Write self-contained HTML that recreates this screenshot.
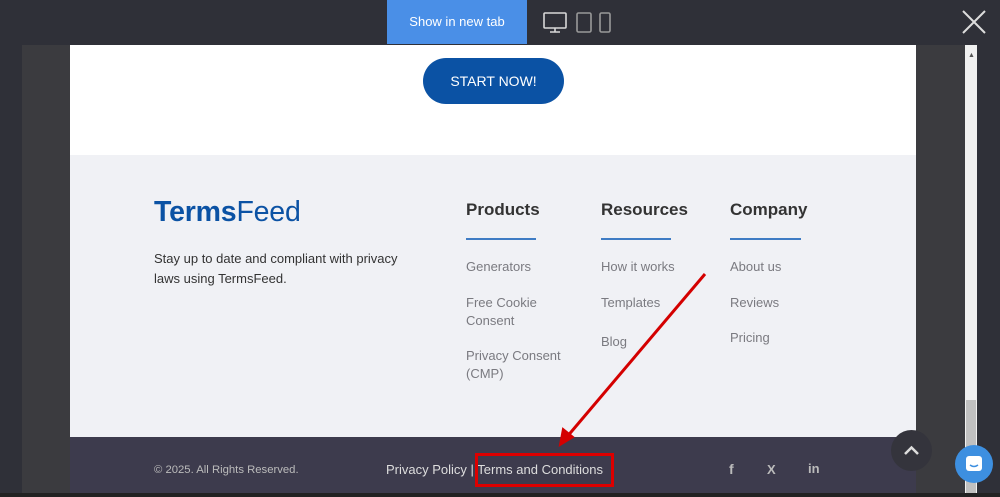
<!DOCTYPE html>
<html><head><style>
*{margin:0;padding:0;box-sizing:border-box}
body{width:1000px;height:497px;overflow:hidden;background:#2f3038;position:relative;font-family:"Liberation Sans",sans-serif}
.a{position:absolute}
.h{font-weight:bold;font-size:17px;color:#333}
.l{font-size:13px;color:#7a7a80;line-height:18px}
</style></head><body>
<div class="a" style="left:22px;top:45px;width:48px;height:452px;background:#3b3b3f"></div>
<div class="a" style="left:916px;top:45px;width:49px;height:452px;background:#3b3b3f"></div>
<div class="a" style="left:965px;top:45px;width:12px;height:452px;background:#f0f0f0"></div>
<div class="a" style="left:966px;top:400px;width:10px;height:97px;background:#c0c0c0"></div>
<div class="a" style="left:968px;top:52px;font-size:7px;color:#555">▲</div>
<div class="a" style="left:387px;top:0;width:140px;height:44px;background:#4a8fe7;color:#fff;font-size:13px;line-height:44px;text-align:center">Show in new tab</div>
<svg class="a" style="left:540px;top:10px" width="80" height="26" viewBox="0 0 80 26" fill="none" stroke="#d8d8d8" stroke-width="1.6"><rect x="4" y="3" width="22" height="15" rx="1"/><path d="M15 18v4M10 22h10"/><rect x="37" y="3" width="14" height="19" rx="1.5" stroke="#999"/><rect x="60" y="3" width="10" height="19" rx="1.5" stroke="#999"/></svg>
<svg class="a" style="left:961px;top:9px" width="26" height="26" stroke="#ddd" stroke-width="2"><path d="M2 2L24 24M24 2L2 24"/></svg>
<div class="a" style="left:70px;top:45px;width:846px;height:110px;background:#fff"></div>
<div class="a" style="left:423px;top:58px;width:141px;height:46px;border-radius:23px;background:#0b52a4;color:#fff;font-size:14px;line-height:46px;text-align:center">START NOW!</div>
<div class="a" style="left:70px;top:155px;width:846px;height:282px;background:#f0f1f5"></div>
<div class="a" style="left:154px;top:196px;font-size:28.5px;color:#0b52a4;letter-spacing:-.2px"><b>Terms</b>Feed</div>
<div class="a" style="left:154px;top:249px;font-size:13px;color:#333;line-height:20px;width:270px">Stay up to date and compliant with privacy laws using TermsFeed.</div>
<div class="a h" style="left:466px;top:200px">Products</div>
<div class="a h" style="left:601px;top:200px">Resources</div>
<div class="a h" style="left:730px;top:200px">Company</div>
<div class="a" style="left:466px;top:238px;width:70px;height:2px;background:#3f7cc4"></div>
<div class="a" style="left:601px;top:238px;width:70px;height:2px;background:#3f7cc4"></div>
<div class="a" style="left:730px;top:238px;width:71px;height:2px;background:#3f7cc4"></div>
<div class="a l" style="left:466px;top:258px">Generators</div>
<div class="a l" style="left:466px;top:294px">Free Cookie<br>Consent</div>
<div class="a l" style="left:466px;top:347px">Privacy Consent<br>(CMP)</div>
<div class="a l" style="left:601px;top:258px">How it works</div>
<div class="a l" style="left:601px;top:294px">Templates</div>
<div class="a l" style="left:601px;top:333px">Blog</div>
<div class="a l" style="left:730px;top:258px">About us</div>
<div class="a l" style="left:730px;top:294px">Reviews</div>
<div class="a l" style="left:730px;top:329px">Pricing</div>
<div class="a" style="left:70px;top:437px;width:846px;height:56px;background:#3d3b4d"></div>
<div class="a" style="left:154px;top:464px;font-size:11.3px;color:#bbb">© 2025. All Rights Reserved.</div>
<div class="a" style="left:386px;top:462px;font-size:13px;color:#ddd">Privacy Policy | Terms and Conditions</div>
<div class="a" style="left:475px;top:453px;width:139px;height:34px;border:3px solid #d00"></div>
<div class="a" style="left:729px;top:461px;font-size:14px;font-weight:bold;color:#bbb">f</div>
<div class="a" style="left:767px;top:462px;font-size:13px;font-weight:bold;color:#bbb">X</div>
<div class="a" style="left:808px;top:461px;font-size:13px;font-weight:bold;color:#bbb">in</div>
<div class="a" style="left:891px;top:430px;width:41px;height:41px;border-radius:50%;background:#34343c"></div>
<svg class="a" style="left:901px;top:440px" width="21" height="21" stroke="#ddd" stroke-width="2.5" fill="none"><path d="M4 14L10.5 7.5L17 14"/></svg>
<div class="a" style="left:955px;top:445px;width:38px;height:38px;border-radius:50%;background:#3d8fe0"></div>
<svg class="a" style="left:964px;top:454px" width="20" height="20"><rect x="2" y="2" width="16" height="15" rx="3" fill="#fff"/><path d="M6 11q4 3 8 0" stroke="#3d8fe0" stroke-width="1.5" fill="none"/></svg>
<div class="a" style="left:0;top:493px;width:1000px;height:4px;background:#222"></div>
<svg class="a" style="left:0;top:0" width="1000" height="497"><path d="M705 274L566 438" stroke="#d40000" stroke-width="3"/><path d="M560 445L563 429L573 437Z" fill="#d40000" stroke="#d40000" stroke-width="2"/></svg>
</body></html>
